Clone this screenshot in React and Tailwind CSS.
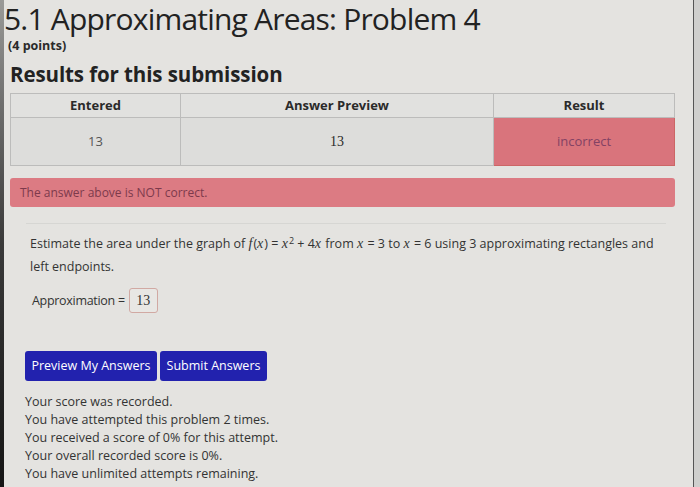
import React from 'react';

const sans = { fontFamily: '"Open Sans", "Noto Sans", sans-serif' };
const serif = { fontFamily: '"Liberation Serif", "DejaVu Serif", serif' };

function M({ children }) {
  return <span className="mr-[1px] italic text-[14px]" style={serif}>{children}</span>;
}

export default function App() {
  const lines = [
    'Your score was recorded.',
    'You have attempted this problem 2 times.',
    'You received a score of 0% for this attempt.',
    'Your overall recorded score is 0%.',
    'You have unlimited attempts remaining.',
  ];

  return (
    <div className="flex h-[487px] w-[700px] overflow-hidden bg-[#e4e3e0] text-[#2a2a2a]" style={sans}>
      <div className="w-[4px] shrink-0 bg-gradient-to-b from-[#9a9a98] via-[#3a3a3a] to-[#151515]" />
      <div className="flex-1 min-w-0">
        <h1 className="whitespace-nowrap pt-[1px] text-[30px] leading-[35px] tracking-[-0.8px] text-[#222]">5.1 Approximating Areas: Problem 4</h1>
        <div className="mt-[2px] pl-[4px] text-[12.5px] font-bold leading-[16px]">(4 points)</div>
        <h2 className="mt-[7px] pl-[6px] text-[20.5px] font-bold leading-[26px] tracking-[-0.1px] text-[#222]">Results for this submission</h2>

        <div className="ml-[6px] mt-[6px] w-[665px]">
          <table className="w-full border-collapse text-[13px]">
            <thead>
              <tr className="h-[24px] bg-[#e1e1df]">
                <th className="w-[170px] border border-[#bcbcbb] font-bold">Entered</th>
                <th className="w-[313px] border border-[#bcbcbb] font-bold">Answer Preview</th>
                <th className="border border-[#bcbcbb] font-bold">Result</th>
              </tr>
            </thead>
            <tbody>
              <tr className="h-[48px] bg-[#dddddb]">
                <td className="border border-[#bcbcbb] text-center text-[#555]">13</td>
                <td className="border border-[#bcbcbb] text-center text-[14px]" style={serif}>13</td>
                <td className="border border-[#c66] bg-[#d9747c] text-center text-[#834264]">incorrect</td>
              </tr>
            </tbody>
          </table>
          <div className="mt-[12px] flex h-[29px] items-center rounded-[3px] bg-[#dc7b83] px-[10px] text-[12px] text-[#7d3a4c]">
            The answer above is NOT correct.
          </div>
        </div>

        <div className="ml-[22px] mt-[16px] w-[640px] border-t border-[#d6d6d3] pt-[8px] text-[12.5px] leading-[23px] text-[#333]">
          <p className="pl-[4px]">
            Estimate the area under the graph of <M>f</M>(<M>x</M>) = <M>x</M><sup className="text-[9px]">2</sup> + 4<M>x</M> from <M>x</M> = 3 to <M>x</M> = 6 using 3 approximating rectangles and left endpoints.
          </p>
          <div className="mt-[10px] flex items-center pl-[6px]">
            <span className="tracking-[-0.3px]">Approximation =</span>
            <span className="ml-[4px] flex h-[25px] w-[29px] items-center justify-center rounded-[3px] border border-[#d1a9a3] bg-[#e8e7e4] text-[14px]" style={serif}>13</span>
          </div>
        </div>

        <div className="ml-[21px] mt-[38px] flex gap-[3px]">
          <button className="h-[30px] w-[132px] rounded-[3px] bg-[#2222ae] text-[12.5px] text-white">Preview My Answers</button>
          <button className="h-[30px] w-[107px] rounded-[3px] bg-[#2222ae] text-[12.5px] text-white">Submit Answers</button>
        </div>

        <div className="ml-[21px] mt-[12px] text-[12.5px] leading-[18px] text-[#333]">
          {lines.map((l) => (
            <div key={l}>{l}</div>
          ))}
        </div>
      </div>
      <div className="w-[1px] shrink-0 bg-[#555]" />
      <div className="w-[6px] shrink-0 bg-[#cfcfcd]" />
    </div>
  );
}
